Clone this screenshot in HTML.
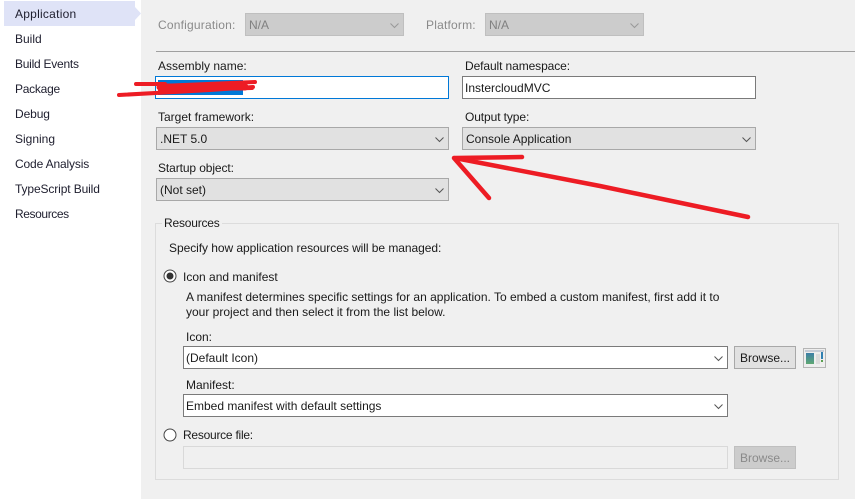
<!DOCTYPE html>
<html>
<head>
<meta charset="utf-8">
<style>
html,body{margin:0;padding:0}
body{width:855px;height:499px;overflow:hidden;background:#f0f0f0;position:relative;font-family:"Liberation Sans",sans-serif;font-size:12px;color:#1a1a1a}
.a{position:absolute;white-space:nowrap;line-height:16px}
.side{position:absolute;left:0;top:0;width:141px;height:499px;background:#fff}
.sel{position:absolute;left:4px;top:1px;width:131px;height:25px;background:#dfe3f7}
.n{left:15px;color:#1e1e2e}
.box{position:absolute;box-sizing:border-box;height:23px;border:1px solid #a8a8a8;background:#e1e1e1;line-height:23px;padding-left:3px;white-space:nowrap}
.dis{background:#ccc;border-color:#bfbfbf;color:#808080}
.w{background:#fff;border-color:#7a7a7a}
.box svg{position:absolute;right:4px;top:9px}
.g{color:#8a8a8a}
</style>
</head>
<body>
<div class="side"></div>
<div class="sel"></div>
<svg class="a" style="left:135px;top:7px" width="7" height="13"><path d="M0 0L6 6.5L0 13Z" fill="#dfe3f7"/></svg>
<div class="a n" style="top:6px;letter-spacing:.25px">Application</div>
<div class="a n" style="top:31px">Build</div>
<div class="a n" style="top:56px;letter-spacing:-.25px">Build Events</div>
<div class="a n" style="top:81px;letter-spacing:-.25px">Package</div>
<div class="a n" style="top:106px;letter-spacing:-.1px">Debug</div>
<div class="a n" style="top:131px">Signing</div>
<div class="a n" style="top:156px;letter-spacing:-.15px">Code Analysis</div>
<div class="a n" style="top:181px;letter-spacing:-.12px">TypeScript Build</div>
<div class="a n" style="top:206px;letter-spacing:-.4px">Resources</div>

<div class="a g" style="left:158px;top:17px;letter-spacing:.2px">Configuration:</div>
<div class="box dis" style="left:245px;top:13px;width:159px">N/A<svg width="9" height="6"><path d="M.5 .5L4.5 4.5L8.5 .5" fill="none" stroke="#999"/></svg></div>
<div class="a g" style="left:426px;top:17px;letter-spacing:.2px">Platform:</div>
<div class="box dis" style="left:485px;top:13px;width:159px">N/A<svg width="9" height="6"><path d="M.5 .5L4.5 4.5L8.5 .5" fill="none" stroke="#999"/></svg></div>
<div class="a" style="left:156px;top:51px;width:699px;height:1px;background:#a0a0a0"></div>

<div class="a" style="left:158px;top:58px">Assembly name:</div>
<div class="box w" style="left:155px;top:76px;width:294px;border-color:#0078d7"></div>
<div class="a" style="left:158px;top:80px;width:85px;height:15px;background:#0078d7"></div>
<div class="a" style="left:465px;top:58px;letter-spacing:-.1px">Default namespace:</div>
<div class="box w" style="left:462px;top:76px;width:294px;padding-left:2px">InstercloudMVC</div>

<div class="a" style="left:158px;top:109px">Target framework:</div>
<div class="box" style="left:156px;top:127px;width:293px">.NET 5.0<svg width="9" height="6"><path d="M.5 .5L4.5 4.5L8.5 .5" fill="none" stroke="#555"/></svg></div>
<div class="a" style="left:465px;top:109px;letter-spacing:-.1px">Output type:</div>
<div class="box" style="left:462px;top:127px;width:294px">Console Application<svg width="9" height="6"><path d="M.5 .5L4.5 4.5L8.5 .5" fill="none" stroke="#555"/></svg></div>
<div class="a" style="left:158px;top:160px;letter-spacing:-.1px">Startup object:</div>
<div class="box" style="left:156px;top:178px;width:293px">(Not set)<svg width="9" height="6"><path d="M.5 .5L4.5 4.5L8.5 .5" fill="none" stroke="#555"/></svg></div>

<div class="a" style="left:155px;top:223px;width:682px;height:255px;border:1px solid #dcdcdc"></div>
<div class="a" style="left:162px;top:215px;background:#f0f0f0;padding:0 2px;letter-spacing:-.2px">Resources</div>
<div class="a" style="left:169px;top:240px;letter-spacing:-.05px">Specify how application resources will be managed:</div>

<svg class="a" style="left:163px;top:269px" width="14" height="14"><circle cx="7" cy="7" r="6" fill="#fff" stroke="#444"/><circle cx="7" cy="7" r="3.5" fill="#333"/></svg>
<div class="a" style="left:183px;top:269px">Icon and manifest</div>
<div class="a" style="left:186px;top:289px">A manifest determines specific settings for an application. To embed a custom manifest, first add it to</div>
<div class="a" style="left:186px;top:304px">your project and then select it from the list below.</div>
<div class="a" style="left:186px;top:329px">Icon:</div>
<div class="box w" style="left:183px;top:346px;width:545px;padding-left:2px">(Default Icon)<svg width="9" height="6"><path d="M.5 .5L4.5 4.5L8.5 .5" fill="none" stroke="#555"/></svg></div>
<div class="box" style="left:734px;top:346px;width:62px;text-align:center;padding:0">Browse...</div>
<svg class="a" style="left:803px;top:348px" width="23" height="20">
<rect x=".5" y=".5" width="22" height="19" fill="#eee" stroke="#b5b5b5"/>
<rect x="2" y="2" width="19" height="2" fill="#c6ccd6"/>
<defs><linearGradient id="g" x1="0" y1="0" x2="0" y2="1"><stop offset="0" stop-color="#3d7fa8"/><stop offset="1" stop-color="#5fa873"/></linearGradient></defs>
<rect x="3" y="5" width="8" height="11" fill="url(#g)"/>
<rect x="13" y="6" width="4" height="10" fill="#dcdcdc"/>
<rect x="18" y="4" width="2" height="7" fill="#2f7fb0"/>
<rect x="18" y="12" width="2" height="2" fill="#5aa050"/>
</svg>
<div class="a" style="left:186px;top:377px">Manifest:</div>
<div class="box w" style="left:183px;top:394px;width:545px;padding-left:2px">Embed manifest with default settings<svg width="9" height="6"><path d="M.5 .5L4.5 4.5L8.5 .5" fill="none" stroke="#555"/></svg></div>
<svg class="a" style="left:163px;top:428px" width="14" height="14"><circle cx="7" cy="7" r="6" fill="#fff" stroke="#444"/></svg>
<div class="a" style="left:183px;top:427px;letter-spacing:-.25px">Resource file:</div>
<div class="box" style="left:183px;top:446px;width:545px;background:#f0f0f0;border-color:#d9d9d9"></div>
<div class="box dis" style="left:734px;top:446px;width:62px;text-align:center;padding:0;color:#8a8a8a">Browse...</div>

<svg class="a" style="left:0;top:0" width="855" height="499" fill="none" stroke="#ed1c24" stroke-linecap="round" stroke-linejoin="round">
<path d="M136 84L165 84M160 86L255 82M160 90L252 88M119 95L210 90L253 87" stroke-width="4"/>
<path d="M160 87L245 87" stroke-width="7"/>
<path d="M522 157L455 158M455 158L600 186L748 217" stroke-width="4.5"/>
<path d="M454 158L489 198" stroke-width="4.5"/>
</svg>
</body>
</html>
